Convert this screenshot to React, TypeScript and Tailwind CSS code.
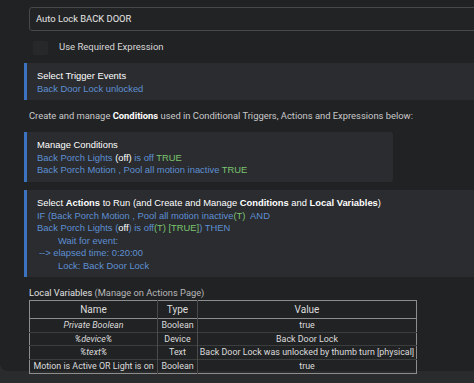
const blue = "text-[#5f8fd2]";
const green = "text-[#7cc46f]";

const vars = [
  { name: "Private Boolean", type: "Boolean", value: "true", italic: true },
  { name: "%device%", type: "Device", value: "Back Door Lock", italic: true },
  { name: "%text%", type: "Text", value: "Back Door Lock was unlocked by thumb turn [physical]", italic: true },
  { name: "Motion is Active OR Light is on", type: "Boolean", value: "true", italic: false },
];

export default function App() {
  return (
    <div className="h-[383px] w-[474px] overflow-hidden bg-[#2a2b2c]">
      <div className="h-[380px] rounded-bl-lg bg-[#212224] pl-[24px] font-['Roboto',sans-serif] text-[#d4d4d4]">
        <div className="-mt-[9px] ml-[5px] text-[10px] leading-[12px] text-[#cfcfcf]">Name this Rule</div>
        <div className="ml-[5px] mt-[4px] flex h-[24px] w-[470px] items-center rounded-[3px] border border-[#47484a] bg-[#222325] px-[6px] text-[9.4px] text-[#e6e6e6]">
          Auto Lock BACK DOOR
        </div>
        <div className="mt-[6px] flex h-[21px] items-center">
          <span className="ml-[9px] h-[14px] w-[15px] rounded-[2px] bg-[#27282a]" />
          <span className="ml-[11px] text-[9.5px] text-[#d8d8d8]">Use Required Expression</span>
        </div>

        <Panel className="mt-[5px] h-[37px] w-[450px] pt-[7px]">
          <div className="text-white">Select Trigger Events</div>
          <div className={blue}>Back Door Lock unlocked</div>
        </Panel>

        <p className="ml-[5px] mt-[10px] text-[9.4px] leading-[12px] text-[#c9c9c9]">
          Create and manage <b className="font-bold text-white">Conditions</b> used in Conditional Triggers, Actions and Expressions below:
        </p>

        <Panel className="mt-[10px] h-[50px] w-[369px] rounded-r-[3px] pt-[7px]">
          <div className="text-white">Manage Conditions</div>
          <div className={blue}>
            Back Porch Lights <span className="text-white">(off)</span> is off <span className={green}>TRUE</span>
          </div>
          <div className={blue}>
            Back Porch Motion , Pool all motion inactive <span className={green}>TRUE</span>
          </div>
        </Panel>

        <Panel className="mt-[8px] h-[87px] w-[450px] pt-[7px]">
          <div className="text-white">
            Select <b>Actions</b> to Run (and Create and Manage <b>Conditions</b> and <b>Local Variables</b>)
          </div>
          <div className={blue}>
            IF (Back Porch Motion , Pool all motion inactive<span className={green}>(T)</span>&nbsp; AND
          </div>
          <div className={blue}>
            Back Porch Lights (<span className="text-white">off</span>) is off<span className={green}>(T) [TRUE]</span>) THEN
          </div>
          <div className={`${blue} pl-[21px]`}>Wait for event:</div>
          <div className={`${blue} pl-[2px]`}>--&gt; elapsed time: 0:20:00</div>
          <div className={`${blue} pl-[21px]`}>Lock: Back Door Lock</div>
        </Panel>

        <div className="ml-[5px] mt-[10px] text-[9.3px] leading-[12px] text-[#b8b8b8]">
          <span className="text-[#e0e0e0]">Local Variables</span> (Manage on Actions Page)
        </div>
        <table className="ml-[5px] mt-[1px] w-[388px] table-fixed border-collapse border border-[#8d8d8d] text-center text-[8.9px] text-[#dcdcdc]">
          <thead>
            <tr className="border-b border-[#8d8d8d] text-[10px]">
              <th className="h-[18px] w-[128px] border-r border-[#4a4a4a] p-0 font-normal leading-[17px]">Name</th>
              <th className="h-[18px] w-[40px] border-r border-[#4a4a4a] p-0 font-normal leading-[17px]">Type</th>
              <th className="h-[18px] p-0 font-normal leading-[17px]">Value</th>
            </tr>
          </thead>
          <tbody>
            {vars.map((v) => (
              <tr key={v.name} className="border-b border-[#3c3d3f] last:border-b-0">
                <td className={`h-[13.7px] overflow-hidden whitespace-nowrap border-r border-[#4a4a4a] p-0 leading-[12.7px] ${v.italic ? "italic" : ""}`}>{v.name}</td>
                <td className="h-[13.7px] border-r border-[#4a4a4a] p-0 leading-[12.7px]">{v.type}</td>
                <td className="h-[13.7px] whitespace-nowrap p-0 leading-[12.7px]">{v.value}</td>
              </tr>
            ))}
          </tbody>
        </table>
      </div>
    </div>
  );
}

function Panel({ className, children }: { className: string; children: React.ReactNode }) {
  return (
    <div className={`border-l-[3px] border-[#3b73c0] bg-[#2a2c2f] pl-[10px] font-['Liberation_Sans',Arial,sans-serif] text-[9.4px] leading-[12.5px] ${className}`}>
      {children}
    </div>
  );
}
